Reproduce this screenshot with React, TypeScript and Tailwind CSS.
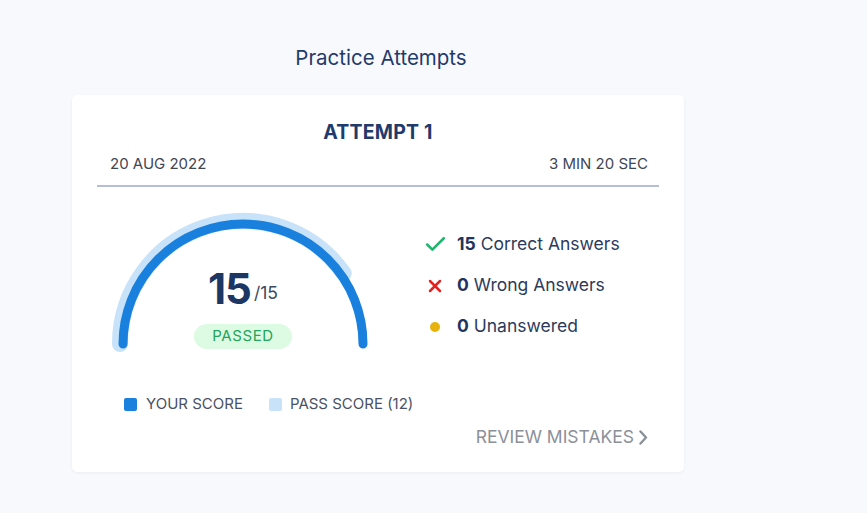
import React from "react";
import { Check, X } from "lucide-react";

function Gauge() {
  const cx = 140;
  const cy = 135;
  const rl = 123;
  const rd = 120;
  const end = (35 * Math.PI) / 180;
  const lx = cx + rl * Math.cos(end);
  const ly = cy - rl * Math.sin(end);
  return (
    <div className="relative w-[280px] h-[160px] shrink-0">
      <svg className="absolute inset-0" width="280" height="160" viewBox="0 0 280 160">
        <path
          d={`M ${cx - rl} ${cy} A ${rl} ${rl} 0 0 1 ${lx} ${ly}`}
          fill="none"
          stroke="#c7e2f9"
          strokeWidth="16"
          strokeLinecap="round"
        />
        <path
          d={`M ${cx - rd} ${cy} A ${rd} ${rd} 0 0 1 ${cx + rd} ${cy}`}
          fill="none"
          stroke="#1a80de"
          strokeWidth="9"
          strokeLinecap="round"
        />
      </svg>
      <div className="relative flex flex-col items-center pt-[57px]">
        <div className="flex items-baseline">
          <span className="text-[42px] font-bold leading-[46px] text-[#1c3764] tracking-[-1px]">15</span>
          <span className="text-[17.5px] text-[#3e4a60] ml-[3px] -translate-y-[5px]">/15</span>
        </div>
        <div className="mt-[12px] w-[98px] h-[25px] rounded-full bg-[#dcfbe2] flex items-center justify-center text-[15px] tracking-[0.6px] text-[#26a35c]">
          PASSED
        </div>
      </div>
    </div>
  );
}

export default function App() {
  return (
    <div
      className="min-h-screen bg-[#f8f9fd] pl-[72px] pt-[44px]"
      style={{ fontFamily: "Inter, 'Noto Sans', sans-serif" }}
    >
      <div className="w-[612px]">
        <h2 className="text-center text-[20.5px] leading-[28px] text-[#1f3b6b] pl-[6px]">Practice Attempts</h2>
        <div className="mt-[23px] bg-white rounded-[5px] shadow-[0_1px_3px_rgba(30,40,90,0.06)] px-[25px] pt-[25px] pb-[24px]">
          <div className="text-center text-[19.5px] font-bold leading-[24px] text-[#1f3b6b] tracking-[0.2px]">ATTEMPT 1</div>
          <div className="mt-[10px] flex justify-between px-[13px] text-[15px] leading-[20px] text-[#3f4654]">
            <span>20 AUG 2022</span>
            <span className="mr-[-2px]">3 MIN 20 SEC</span>
          </div>
          <div className="mt-[11px] h-[2px] bg-[#b5bdd8]" />
          <div className="mt-[22px] flex items-start">
            <div className="ml-[6px]">
              <Gauge />
            </div>
            <div className="ml-[37px] pt-[15px] flex flex-col text-[17.5px] text-[#2c3b5c]">
              <div className="flex items-center h-[41px]">
                <span className="w-[30px] mr-[7px] flex items-center justify-center">
                  <Check size={25} strokeWidth={2.4} color="#20b46e" />
                </span>
                <span><b className="font-bold text-[#1f3560]">15</b> Correct Answers</span>
              </div>
              <div className="flex items-center h-[41px]">
                <span className="w-[30px] mr-[7px] flex items-center justify-center">
                  <X size={20} strokeWidth={3} color="#e02424" />
                </span>
                <span><b className="font-bold text-[#1f3560]">0</b> Wrong Answers</span>
              </div>
              <div className="flex items-center h-[41px]">
                <span className="w-[30px] mr-[7px] flex items-center justify-center">
                  <span className="w-[10px] h-[10px] rounded-full bg-[#e8b20c]" />
                </span>
                <span><b className="font-bold text-[#1f3560]">0</b> Unanswered</span>
              </div>
            </div>
          </div>
          <div className="mt-[25px] ml-[27px] flex items-center text-[15px] leading-[20px] text-[#4a5263]">
            <span className="w-[13px] h-[13px] rounded-[2px] bg-[#1a80de] mr-[9px]" />
            <span>YOUR SCORE</span>
            <span className="w-[13px] h-[13px] rounded-[2px] bg-[#c7e2f9] ml-[26px] mr-[8px]" />
            <span>PASS SCORE (12)</span>
          </div>
          <div className="mt-[12px] flex justify-end items-center pr-[11px] text-[17.5px] leading-[22px] text-[#8b9099]">
            <span>REVIEW MISTAKES</span>
            <svg width="9" height="15" viewBox="0 0 9 15" className="ml-[5px]">
              <polyline points="1.5,1.5 7,7.5 1.5,13.5" fill="none" stroke="#8b9099" strokeWidth="2.4" strokeLinecap="round" strokeLinejoin="round" />
            </svg>
          </div>
        </div>
      </div>
    </div>
  );
}
